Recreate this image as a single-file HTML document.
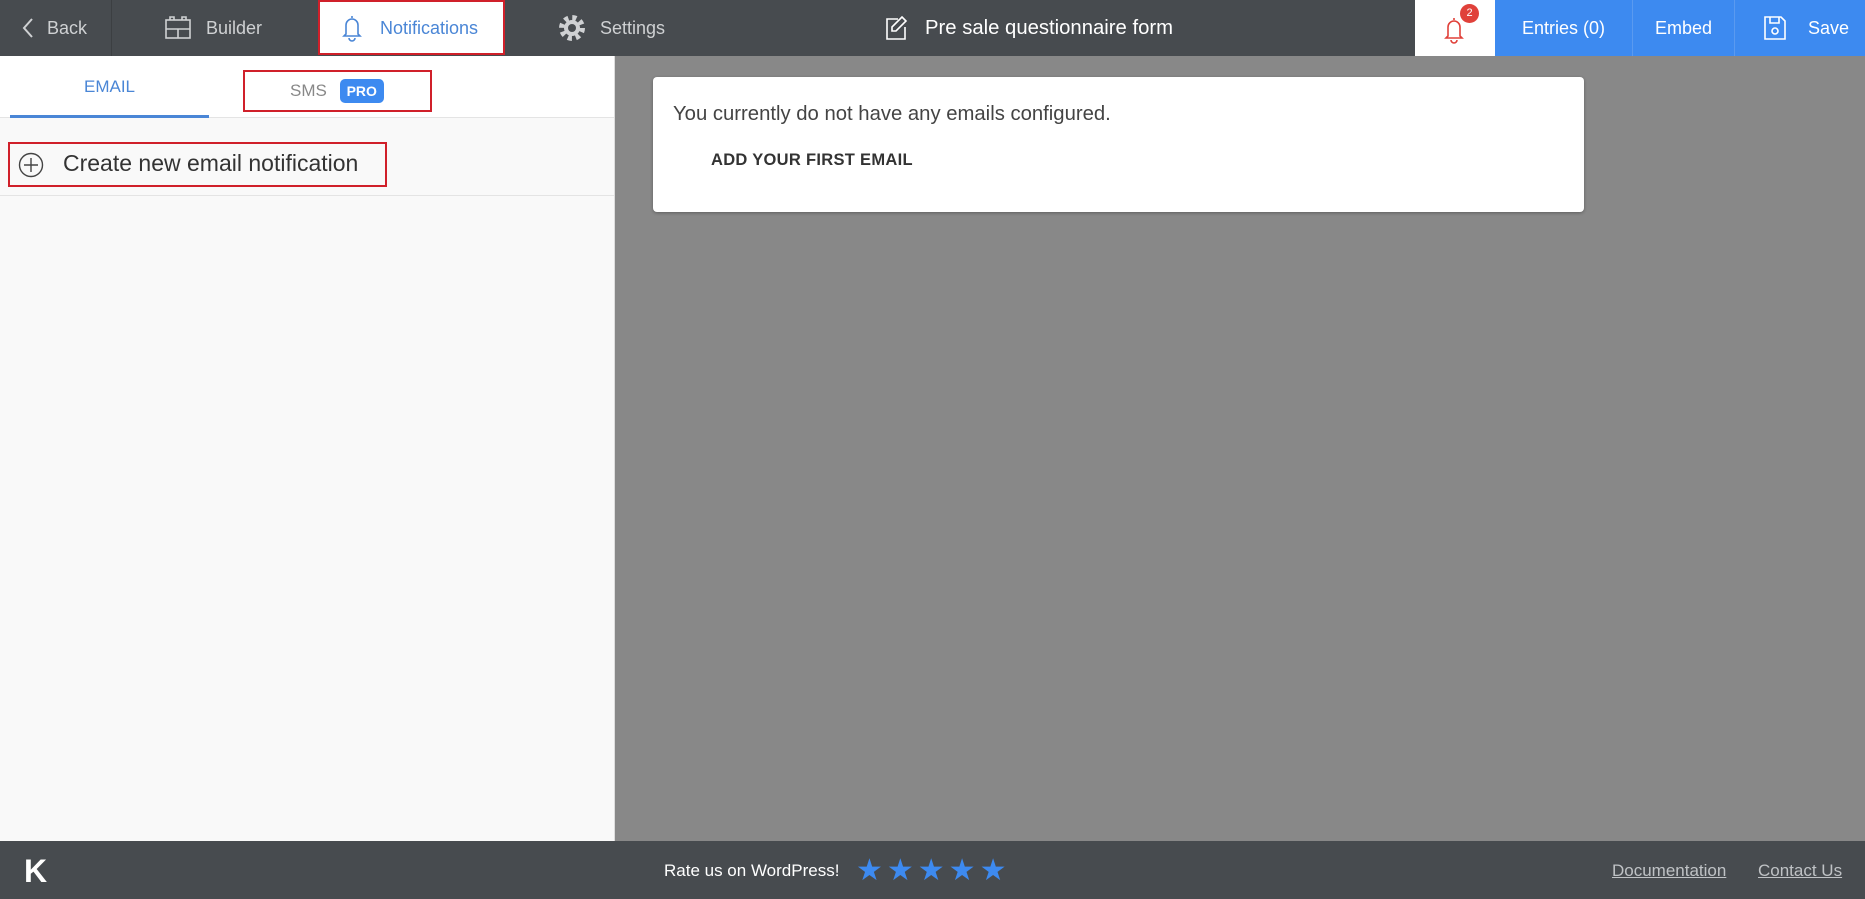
<!DOCTYPE html>
<html><head><meta charset="utf-8"><style>
*{box-sizing:border-box;margin:0;padding:0}
body{width:1865px;height:899px;overflow:hidden;font-family:"Liberation Sans",sans-serif;background:#888;position:relative}
.hdr{position:absolute;left:0;top:0;width:1865px;height:56px;background:#474b4f;color:#cfd1d3;font-size:18px}
.a{position:absolute;top:0;height:56px;display:flex;align-items:center}
.left{position:absolute;left:0;top:56px;width:615px;height:785px;background:#f9f9f9;border-right:1px solid #ddd}
.red{position:absolute;border:2px solid #d0202a}
.card{position:absolute;left:653px;top:77px;width:931px;height:135px;background:#fff;border-radius:4px;box-shadow:0 1px 3px rgba(0,0,0,.3)}
.ftr{position:absolute;left:0;top:841px;width:1865px;height:58px;background:#474b4f;color:#fff}
</style></head><body>
<div class="hdr">
 <div class="a" style="left:21px;color:#cfd1d3"><svg width="14" height="22" viewBox="0 0 14 22"><path d="M11 2L3 11l8 9" stroke="#cfd1d3" stroke-width="2" fill="none"/></svg><span style="margin-left:12px">Back</span></div>
 <div style="position:absolute;left:111px;top:0;width:1px;height:56px;background:#3c3f42"></div>
 <div class="a" style="left:164px"><svg width="28" height="24" viewBox="0 0 28 24" fill="none" stroke="#cfd1d3" stroke-width="1.6"><rect x="2" y="4" width="24" height="18"/><path d="M2 13h24M14 13v9M6 4V1h4v3M18 4V1h4v3"/></svg><span style="margin-left:14px">Builder</span></div>
 <div style="position:absolute;left:318px;top:0;width:187px;height:55px;background:#fff;border:2px solid #d0202a"></div>
 <div class="a" style="left:341px;color:#4a86d6"><svg width="22" height="28" viewBox="0 0 22 28" fill="none" stroke="#4a86d6" stroke-width="1.6"><path d="M11 2v2M5 20V11a6 6 0 0 1 12 0v9l2 2H3z M8 24a3 3 0 0 0 6 0"/></svg><span style="margin-left:17px">Notifications</span></div>
 <div class="a" style="left:556px"><svg width="32" height="32" viewBox="0 0 32 32"><circle cx="16" cy="16" r="10" fill="none" stroke="#cfd1d3" stroke-width="6" stroke-dasharray="4 3.85"/><circle cx="16" cy="16" r="8" fill="#cfd1d3"/><circle cx="16" cy="16" r="4" fill="#474b4f"/></svg><span style="margin-left:12px">Settings</span></div>
 <div class="a" style="left:884px;color:#fff;font-size:20.3px"><svg width="24" height="26" viewBox="0 0 24 26" fill="none" stroke="#fff" stroke-width="1.6"><path d="M14 4H3v20h18V12"/><path d="M18 2l4 4-10 10H8v-4z"/></svg><span style="margin-left:17px">Pre sale questionnaire form</span></div>
 <div style="position:absolute;left:1415px;top:0;width:80px;height:56px;background:#fff"></div>
 <svg style="position:absolute;left:1442px;top:14px" width="24" height="30" viewBox="0 0 24 30" fill="none" stroke="#e0413a" stroke-width="1.6"><path d="M12 4v2M6 22V13a6 6 0 0 1 12 0v9l2 2H4z M9 26a3 3 0 0 0 6 0"/></svg>
 <div style="position:absolute;left:1460px;top:4px;width:19px;height:19px;border-radius:50%;background:#e0413a;color:#fff;font-size:11px;text-align:center;line-height:19px">2</div>
 <div class="a" style="left:1495px;width:137px;background:#3d8af0;color:#fff;justify-content:center">Entries (0)</div>
 <div class="a" style="left:1632px;width:102px;background:#3d8af0;color:#fff;justify-content:center;border-left:1px solid #5a9af0">Embed</div>
 <div class="a" style="left:1734px;width:131px;background:#3d8af0;color:#fff;border-left:1px solid #5a9af0;padding-left:28px"><svg width="24" height="26" viewBox="0 0 24 26" fill="none" stroke="#fff" stroke-width="1.6"><path d="M2 2h16l4 4v18H2z"/><path d="M7 2v6h9V2"/><circle cx="12" cy="16" r="3"/></svg><span style="margin-left:21px">Save</span></div>
</div>
<div class="left">
 <div style="position:absolute;left:0;top:0;width:614px;height:62px;background:#fff;border-bottom:1px solid #e4e4e4"></div>
 <div style="position:absolute;left:10px;top:0;width:199px;height:62px;text-align:center;line-height:62px;color:#4a86d6;font-size:17px">EMAIL</div>
 <div style="position:absolute;left:10px;top:59px;width:199px;height:3px;background:#4a86d6"></div>
 <div class="red" style="left:243px;top:14px;width:189px;height:42px"></div>
 <div style="position:absolute;left:290px;top:22px;font-size:17px;color:#888;line-height:26px">SMS <span style="display:inline-block;margin-left:8px;background:#3d8af0;color:#fff;font-weight:bold;font-size:14px;border-radius:5px;padding:0 7px;line-height:24px">PRO</span></div>
 <div style="position:absolute;left:0;top:139px;width:614px;height:1px;background:#e4e4e4"></div>
 <div class="red" style="left:8px;top:86px;width:379px;height:45px"></div>
 <svg style="position:absolute;left:18px;top:96px" width="26" height="26" viewBox="0 0 26 26" fill="none" stroke="#444" stroke-width="1.4"><circle cx="13" cy="13" r="11.5"/><path d="M13 6v14M6 13h14"/></svg>
 <div style="position:absolute;left:63px;top:94px;font-size:23px;color:#333">Create new email notification</div>
</div>
<div class="card">
 <div style="position:absolute;left:20px;top:26px;font-size:20.3px;color:#444">You currently do not have any emails configured.</div>
 <div style="position:absolute;left:58px;top:74px;font-size:16.5px;color:#333;font-weight:bold;letter-spacing:0.3px">ADD YOUR FIRST EMAIL</div>
</div>
<div class="ftr">
 <div style="position:absolute;left:24px;top:14px;font-size:32px;font-weight:bold;line-height:32px">K</div>
 <div style="position:absolute;left:664px;top:20px;font-size:17px">Rate us on WordPress!</div>
 <div style="position:absolute;left:856px;top:15px;font-size:30px;color:#3d8af0;letter-spacing:4px;line-height:30px">★★★★★</div>
 <div style="position:absolute;left:1612px;top:20px;font-size:17px;color:#bfc2c5;text-decoration:underline">Documentation</div>
 <div style="position:absolute;left:1758px;top:20px;font-size:17px;color:#bfc2c5;text-decoration:underline">Contact Us</div>
</div>
</body></html>
